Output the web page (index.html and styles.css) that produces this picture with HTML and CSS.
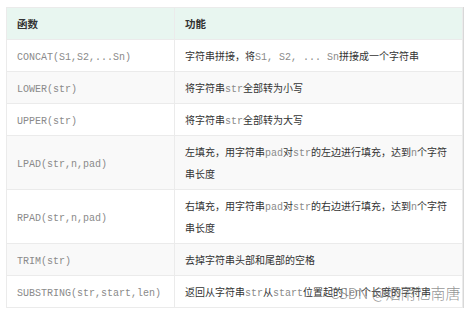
FILE: index.html
```html
<!DOCTYPE html>
<html>
<head>
<meta charset="utf-8">
<link rel="stylesheet" href="styles.css">
</head>
<body>
<div class="wrap">
<table class="fn">
  <thead>
    <tr><th class="c1">函数</th><th>功能</th></tr>
  </thead>
  <tbody>
    <tr><td class="c1"><code>CONCAT(S1,S2,...Sn)</code></td><td>字符串拼接，将<code>S1, S2, ... Sn</code>拼接成一个字符串</td></tr>
    <tr class="alt"><td class="c1"><code>LOWER(str)</code></td><td>将字符串<code>str</code>全部转为小写</td></tr>
    <tr><td class="c1"><code>UPPER(str)</code></td><td>将字符串<code>str</code>全部转为大写</td></tr>
    <tr class="alt"><td class="c1"><code>LPAD(str,n,pad)</code></td><td>左填充，用字符串<code>pad</code>对<code>str</code>的左边进行填充，达到<code>n</code>个字符串长度</td></tr>
    <tr><td class="c1"><code>RPAD(str,n,pad)</code></td><td>右填充，用字符串<code>pad</code>对<code>str</code>的右边进行填充，达到<code>n</code>个字符串长度</td></tr>
    <tr class="alt"><td class="c1"><code>TRIM(str)</code></td><td>去掉字符串头部和尾部的空格</td></tr>
    <tr><td class="c1"><code>SUBSTRING(str,start,len)</code></td><td>返回从字符串<code>str</code>从<code>start</code>位置起的<code>len</code>个长度的字符串</td></tr>
  </tbody>
</table>
<div class="mark">CSDN @烟雨忆南唐</div>
</div>
</body>
</html>
```
FILE: styles.css
```css
html, body {
  margin: 0;
  padding: 0;
  background: #ffffff;
}
body {
  font-family: "Noto Sans CJK SC", "Noto Sans", sans-serif;
  color: #333333;
}
.wrap {
  position: relative;
  padding: 7px 0 0 6px;
}
.fn {
  border-collapse: collapse;
  width: 457px;
  table-layout: fixed;
  border: 1px solid #e4e4e4;
  box-shadow: 1px 0 0 #d8d8d8;
}
.fn th, .fn td {
  border: 1px solid #ebebeb;
  text-align: left;
  vertical-align: middle;
  padding: 4.5px 10px 4.5px 10px;
  font-size: 10px;
  line-height: 22px;
}
.fn th {
  background: #e8f6f0;
  font-weight: bold;
  font-size: 10.5px;
  color: #333;
}
.fn .c1 {
  width: 147px;
}
.fn tr.alt td {
  background: #f9f9f9;
}
code {
  font-family: "Liberation Mono", "DejaVu Sans Mono", monospace;
  font-size: 10px;
  line-height: 10px;
  color: #8a8a8a;
}
.mark {
  position: absolute;
  left: 330px;
  top: 281px;
  font-size: 15px;
  line-height: 24px;
  color: rgba(110, 110, 110, 0.75);
  font-family: "Noto Sans CJK SC", sans-serif;
  font-weight: 300;
  white-space: nowrap;
}
```
